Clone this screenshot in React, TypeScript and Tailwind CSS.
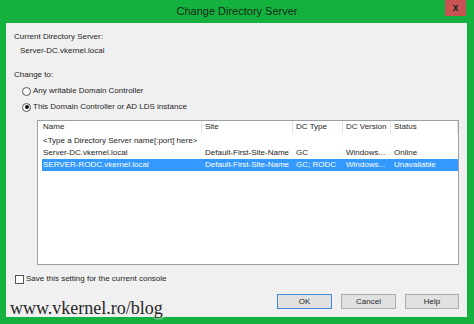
const cols = ["w-[164px] pl-[5px]", "w-[91px] pl-[3px]", "w-[50px] pl-[3px]", "w-[48px] pl-[3px]", "w-[67px] pl-[3px]"];

const headers = ["Name", "Site", "DC Type", "DC Version", "Status"];

const rows: { cells: string[]; selected?: boolean }[] = [
  { cells: ["<Type a Directory Server name[:port] here>", "", "", "", ""] },
  { cells: ["Server-DC.vkernel.local", "Default-First-Site-Name", "GC", "Windows...", "Online"] },
  { cells: ["SERVER-RODC.vkernel.local", "Default-First-Site-Name", "GC; RODC", "Windows...", "Unavailable"], selected: true },
];

function Radio({ checked, label }: { checked?: boolean; label: string }) {
  return (
    <div className="ml-[8px] flex h-[12px] items-center gap-[2px]">
      <span className="flex h-[9px] w-[9px] items-center justify-center rounded-full border border-[#555] bg-white">
        {checked && <span className="h-[4px] w-[4px] rounded-full bg-[#111]" />}
      </span>
      <span>{label}</span>
    </div>
  );
}

export default function App() {
  return (
    <div className="relative flex h-[324px] w-[474px] flex-col overflow-hidden bg-[#14b13f] font-['Liberation_Sans',Arial,sans-serif] text-[8px] leading-[12px] text-[#1e1e1e]">
      {/* title bar */}
      <div className="relative flex h-[23px] shrink-0 items-center justify-center pb-[1px]">
        <span className="text-[11px] text-[#14291a]">Change Directory Server</span>
        <div className="absolute right-[8px] top-0 flex h-[16px] w-[21px] items-center justify-center bg-[#c75454]">
          <span className="text-[10px] font-bold leading-none text-[#1a1a1a]">x</span>
        </div>
      </div>

      {/* dialog body */}
      <div className="ml-[6px] mr-[7px] mb-[7px] flex flex-1 flex-col bg-[#f0f0f0] px-[8px] pt-[8px] pb-[8px]">
        <div>Current Directory Server:</div>
        <div className="mt-[2px] ml-[6px]">Server-DC.vkernel.local</div>
        <div className="mt-[12px]">Change to:</div>
        <div className="mt-[4px]">
          <Radio label="Any writable Domain Controller" />
        </div>
        <div className="mt-[4px]">
          <Radio checked label="This Domain Controller or AD LDS instance" />
        </div>

        <div className="mt-[7px] ml-[23px] h-[145px] w-[422px] border border-[#9a9ea6] bg-white">
          <div className="flex h-[13px] items-center">
            {headers.map((h, i) => (
              <div key={h} className={`${cols[i]} h-full border-r border-[#e3e3e3] leading-[12px]`}>
                {h}
              </div>
            ))}
          </div>
          <div className="mt-[1px] pl-[4px]">
            {rows.map((r) => (
              <div
                key={r.cells[0]}
                className={`flex h-[12px] items-center ${r.selected ? "bg-[#3399ff] text-white" : ""}`}
              >
                {r.cells.map((c, i) => (
                  <div
                    key={i}
                    className={`${i === 0 ? "w-[160px] pl-[1px]" : cols[i]} overflow-hidden whitespace-nowrap`}
                  >
                    {c}
                  </div>
                ))}
              </div>
            ))}
          </div>
        </div>

        <div className="mt-[8px] ml-[1px] flex h-[12px] items-center gap-[2px]">
          <span className="h-[9px] w-[9px] border border-[#555] bg-white" />
          <span>Save this setting for the current console</span>
        </div>

        <div className="mt-[9px] flex justify-end gap-[9px]">
          <button className="h-[15px] w-[55px] border border-[#3c8ad8] bg-[#e1e1e1] text-[8px] leading-none">OK</button>
          <button className="h-[15px] w-[55px] border border-[#adadad] bg-[#e1e1e1] text-[8px] leading-none">Cancel</button>
          <button className="h-[15px] w-[54px] border border-[#adadad] bg-[#e1e1e1] text-[8px] leading-none">Help</button>
        </div>
      </div>

      {/* watermark */}
      <div className="absolute left-[10px] top-[299px] font-['Liberation_Serif',serif] text-[18px] leading-[18px] text-[#262626] [text-shadow:0_0_3px_#fff,1px_1px_2px_#ddd]">
        www.vkernel.ro/blog
      </div>
    </div>
  );
}
